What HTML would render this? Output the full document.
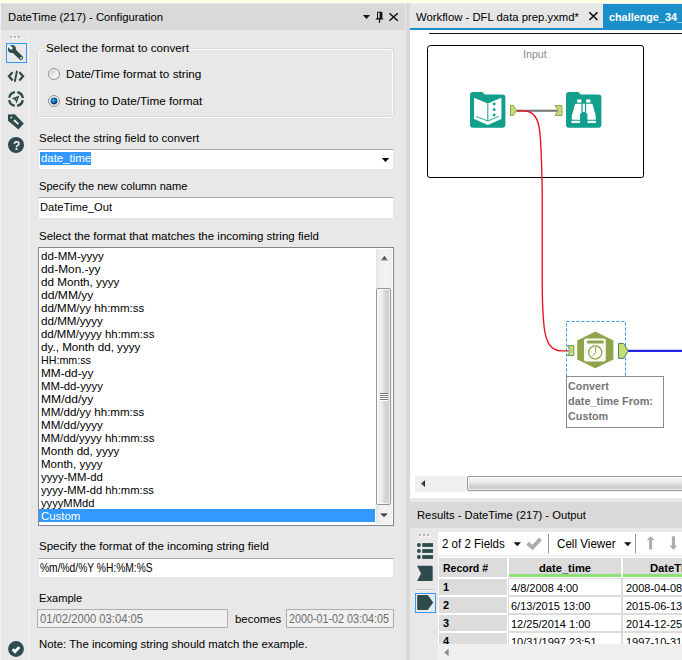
<!DOCTYPE html>
<html lang="en"><head><meta charset="utf-8"><title>DateTime (217) - Configuration</title>
<style>
html,body{margin:0;padding:0;background:#fff;}
#root{position:relative;width:682px;height:660px;overflow:hidden;background:#e8e8e8;font-family:"Liberation Sans",sans-serif;font-size:11.5px;line-height:14px;color:#000;}
#root div,#root svg,#root span{position:absolute;box-sizing:border-box;}
.t{white-space:pre;transform-origin:0 50%;display:block;}

</style></head>
<body>
<div id="root">
<div style="left:0px;top:0px;width:682px;height:3px;background:#ffffe1;"></div>
<div style="left:0px;top:3px;width:1px;height:657px;background:#f2f2f2;"></div>
<div style="left:1px;top:3px;width:404px;height:27px;background:#d9d9d9;border-top:1px solid #e4e4e4;"></div>
<svg style="left:360px;top:10px" width="42" height="15" viewBox="360 10 42 15">
<path d="M362.9 15h7.2l-3.6 4.1z" fill="#111"/>
<path d="M377.5 12.2h4.2v6.2h-4.2z" fill="none" stroke="#111" stroke-width="1"/>
<path d="M379.6 12.2h2.6v6.2h-2.6z" fill="#111"/>
<path d="M375.8 18.9h7.4M379.5 19v4" stroke="#111" stroke-width="1.2" fill="none"/>
<path d="M389.4 13.2l8.4 7.6M397.8 13.2l-8.4 7.6" stroke="#111" stroke-width="1.5" fill="none"/>
</svg>
<div style="left:28px;top:33px;width:1px;height:627px;background:#f4f4f4;"></div>
<div style="left:10px;top:36px;width:2px;height:2px;background:#b4b4b4;box-shadow:1px 1px 0 #fff;"></div>
<div style="left:14px;top:36px;width:2px;height:2px;background:#b4b4b4;box-shadow:1px 1px 0 #fff;"></div>
<div style="left:18px;top:36px;width:2px;height:2px;background:#b4b4b4;box-shadow:1px 1px 0 #fff;"></div>
<div style="left:6px;top:43px;width:21px;height:20px;border:1px solid #3399ff;background:#e9e9e9;"></div>
<svg style="left:6px;top:43px" width="21" height="20" viewBox="6 43 21 20">
<path d="M13.4 50.4 L20.9 57.8" stroke="#2f4b4b" stroke-width="4.4" stroke-linecap="round"/>
<circle cx="11.9" cy="48.9" r="4" fill="#2f4b4b"/>
<path d="M11.4 48.4 L8.5 45.5" stroke="#e9e9e9" stroke-width="2.8"/>
<circle cx="11.2" cy="48.2" r="1.4" fill="#e9e9e9"/>
<circle cx="21.1" cy="58" r="1" fill="#e9e9e9"/>
</svg>
<svg style="left:6px;top:68px" width="21" height="16" viewBox="6 68 21 16">
<path d="M12.6 72.2 L9 76.3 L12.6 80.4 M19.4 72.2 L23 76.3 L19.4 80.4" stroke="#2f4b4b" stroke-width="2.3" fill="none"/>
<path d="M17 70.8 L14.8 81.8" stroke="#2f4b4b" stroke-width="1.9" fill="none"/>
</svg>
<svg style="left:6px;top:89px" width="21" height="20" viewBox="6 89 21 20">
<circle cx="16" cy="99" r="6.9" fill="none" stroke="#2f4b4b" stroke-width="2.4" stroke-dasharray="8.3 2.54" stroke-dashoffset="-1.27"/>
<path d="M19.4 95.6 L11.6 98.4 L15.1 99.9 L16.6 103.4 Z" fill="#2f4b4b"/>
<path d="M17.2 97.9 L15.9 99.1 L16.3 100 Z" fill="#e8e8e8"/>
</svg>
<svg style="left:6px;top:112px" width="21" height="20" viewBox="6 112 21 20">
<path d="M8 114.6 L14.8 114.2 L23.8 123.6 L18.4 129.4 L8 120.8 Z" fill="#2f4b4b"/>
<circle cx="11.3" cy="117.4" r="1" fill="#e8e8e8"/>
<path d="M14 120 L18.4 124.2" stroke="#f4f4f4" stroke-width="1.8"/>
</svg>
<svg style="left:6px;top:135px" width="21" height="20" viewBox="6 135 21 20">
<circle cx="16" cy="145" r="8" fill="#2f4b4b"/>
</svg>
<svg style="left:6px;top:639px" width="21" height="20" viewBox="6 639 21 20">
<circle cx="16" cy="649" r="7.9" fill="#2f4b4b"/>
<path d="M12.7 649.3 L15 651.8 L19.3 647.1" stroke="#fff" stroke-width="2.8" fill="none"/>
</svg>
<div style="left:38px;top:49px;width:355px;height:69px;border:1px solid #fdfdfd;border-radius:3px;"></div>
<div style="left:37px;top:48px;width:357px;height:69px;border:1px solid #d3dde4;border-radius:3px;"></div>
<div style="left:44px;top:44px;width:146px;height:12px;background:#e8e8e8;"></div>
<svg style="left:46.8px;top:66.8px" width="14" height="14" viewBox="-7 -7 14 14"><defs><linearGradient id="rgoff" x1="0.15" y1="0.15" x2="0.85" y2="0.85"><stop offset="0" stop-color="#c9ced3"/><stop offset="0.55" stop-color="#e9ebed"/><stop offset="1" stop-color="#fbfbfb"/></linearGradient></defs><circle r="5.45" fill="#f6f6f6" stroke="#8a8b8c" stroke-width="1"/><circle r="3.7" fill="url(#rgoff)"/></svg>
<svg style="left:46.8px;top:93.8px" width="14" height="14" viewBox="-7 -7 14 14"><defs><radialGradient id="rgon" cx="0.42" cy="0.4" r="0.62"><stop offset="0" stop-color="#4cc6f6"/><stop offset="0.35" stop-color="#1b84c8"/><stop offset="0.8" stop-color="#0f3f72"/><stop offset="1" stop-color="#0c2f58"/></radialGradient></defs><circle r="5.45" fill="#f6f6f6" stroke="#8a8b8c" stroke-width="1"/><circle r="3.45" fill="url(#rgon)"/></svg>
<div style="left:38px;top:149px;width:356px;height:21px;background:#fff;border:1px solid #e3e6ec;border-top-color:#abadb3;"></div>
<div style="left:40px;top:152px;width:51px;height:13px;background:#3399ff;"></div>
<svg style="left:381px;top:156px" width="9" height="6" viewBox="381 156 9 6"><path d="M381.8 158h7.4l-3.7 4z" fill="#000"/></svg>
<div style="left:38px;top:197px;width:356px;height:22px;background:#fff;border:1px solid #e3e6ec;border-top-color:#abadb3;"></div>
<div style="left:38px;top:247px;width:356px;height:279px;background:#fff;border:1px solid #828790;"></div>
<div style="left:39px;top:509px;width:336px;height:13px;background:#3399ff;"></div>
<div style="left:376px;top:249px;width:16px;height:275px;background:linear-gradient(90deg,#e4e4e4 0,#eeeeee 18%,#f3f3f3 50%,#efefef 100%);"></div>
<svg style="left:376px;top:249px" width="17" height="17" viewBox="376 249 17 17"><defs><linearGradient id="aup" x1="0" y1="0" x2="0" y2="1"><stop offset="0" stop-color="#1a1a1a"/><stop offset="1" stop-color="#8a8a8a"/></linearGradient></defs><path d="M380.7 260.4h7.4l-3.7-4.5z" fill="url(#aup)"/></svg>
<svg style="left:376px;top:507px" width="17" height="17" viewBox="376 507 17 17"><defs><linearGradient id="adn" x1="0" y1="0" x2="0" y2="1"><stop offset="0" stop-color="#1a1a1a"/><stop offset="1" stop-color="#8a8a8a"/></linearGradient></defs><path d="M380.4 513.4h7.2l-3.6 4.2z" fill="url(#adn)"/></svg>
<div style="left:376px;top:288px;width:15px;height:217px;border:1px solid #979797;border-radius:2px;background:linear-gradient(90deg,#f5f5f5 0,#ebebeb 38%,#d6d6da 62%,#cbcbd0 100%);box-shadow:inset 0 0 0 1px rgba(255,255,255,.7);"></div>
<div style="left:380px;top:393px;width:8px;height:1px;background:#7a7a7a;box-shadow:0 1px 0 #fff;"></div>
<div style="left:380px;top:395px;width:8px;height:1px;background:#7a7a7a;box-shadow:0 1px 0 #fff;"></div>
<div style="left:380px;top:397px;width:8px;height:1px;background:#7a7a7a;box-shadow:0 1px 0 #fff;"></div>
<div style="left:380px;top:399px;width:8px;height:1px;background:#7a7a7a;box-shadow:0 1px 0 #fff;"></div>
<div style="left:38px;top:558px;width:356px;height:20px;background:#fff;border:1px solid #e3e6ec;border-top-color:#abadb3;"></div>
<div style="left:37px;top:609.4px;width:191px;height:19px;background:#f0f0f0;border:1px solid #adadad;border-radius:1px;"></div>
<div style="left:286px;top:609.4px;width:107.5px;height:19px;background:#f0f0f0;border:1px solid #adadad;border-radius:1px;"></div>
<div style="left:406px;top:3px;width:4px;height:657px;background:#d9d9d9;"></div>
<div style="left:410px;top:3px;width:272px;height:25px;background:#e6e6e6;border-top:1px solid #eeeeee;"></div>
<div style="left:603px;top:4px;width:79px;height:26px;background:#1a8fc9;"></div>
<div style="left:410px;top:28px;width:272px;height:2px;background:#1a8fc9;"></div>
<svg style="left:586px;top:9px" width="15" height="15" viewBox="586 9 15 15"><path d="M589.4 12.4l8 7.6M597.4 12.4l-8 7.6" stroke="#111" stroke-width="1.5" fill="none"/></svg>
<div style="left:410px;top:30px;width:272px;height:468px;background:#fff;"></div>
<div style="left:429px;top:33px;width:253px;height:1px;background:#111;"></div>
<div style="left:427px;top:45px;width:217px;height:133px;border:1px solid #000;border-radius:3.5px 3px 2.5px 3px;"></div>
<svg style="left:468.9px;top:91.3px" width="38" height="38" viewBox="-1 -1 38 38">
<path d="M3 0 H11.6 Q13 0 13.6 1.2 Q14.2 2.4 15.6 2.4 H32.4 Q35.4 2.4 35.4 5.4 V32.7 Q35.4 35.7 32.4 35.7 H3 Q0 35.7 0 32.7 V3 Q0 0 3 0 Z" fill="#12a08c"/>
<path d="M4.1 5.7 L17.8 11.4 L31.4 5.7 V27 L17.8 33 L4.1 27 Z" fill="#fff"/>
<path d="M17.8 11.4 V29" stroke="#12a08c" stroke-width="1" fill="none"/>
<path d="M6.1 24.4 L17.8 29 L28.8 24.4" stroke="#12a08c" stroke-width="0.9" fill="none"/>
<circle cx="24.2" cy="12" r="1.45" fill="#12a08c"/><circle cx="24.2" cy="17.6" r="1.45" fill="#12a08c"/><circle cx="24.2" cy="23" r="1.45" fill="#12a08c"/>
</svg>
<svg style="left:564.9px;top:91.3px" width="38" height="38" viewBox="-1 -1 38 38">
<path d="M3 0 H11.6 Q13 0 13.6 1.2 Q14.2 2.4 15.6 2.4 H32.4 Q35.4 2.4 35.4 5.4 V32.7 Q35.4 35.7 32.4 35.7 H3 Q0 35.7 0 32.7 V3 Q0 0 3 0 Z" fill="#12a08c"/>
<path d="M11.1 7.4 h4.3 v3.1 h-4.3z M20.1 7.4 h4.3 v3.1 h-4.3z" fill="#fff"/>
<path d="M9.1 11.7 H15.4 V21.4 H14.1 V27.7 H5.8 V23.7 Z" fill="#fff"/>
<path d="M26.44 11.7 H20.14 V21.4 H21.44 V27.7 H29.74 V23.7 Z" fill="#fff"/>
<path d="M16.7 11.7 h2.2 v8.3 h-2.2z" fill="#fff"/>
<rect x="5.4" y="28.7" width="8.7" height="2.3" rx="0.8" fill="#fff"/><rect x="21.44" y="28.7" width="8.7" height="2.3" rx="0.8" fill="#fff"/>
</svg>
<svg style="left:410px;top:30px" width="272" height="468" viewBox="410 30 272 468">
<path d="M516.5 110.8 H557.6" stroke="#727272" stroke-width="2" fill="none"/>
<path d="M516.5 110.8 H523 C533 110.8 538.6 117 540 134 C541.4 150 541.8 165 542.2 190 L542.2 280 C542.2 300 542.6 312 544 326 C545.6 341 550 350.8 562 350.8 H569" stroke="#ea0f1c" stroke-width="1.35" fill="none"/>
<path d="M628 350.8 H682" stroke="#2525e6" stroke-width="2.2" fill="none"/>
<!-- selection -->
<rect x="566.5" y="321.5" width="59" height="56" fill="none" stroke="#3b97ea" stroke-width="1" stroke-dasharray="3 2"/>
<!-- anchors -->
<path d="M510.5 105.5 H513.2 L516.6 110.6 L513.2 115.6 H510.5 Z" fill="#c5dd77" stroke="#7ea04a" stroke-width="0.9"/>
<path d="M555 105.5 H562 V115.6 H555 L558.2 110.6 Z" fill="#c5dd77" stroke="#7ea04a" stroke-width="0.9"/>
<path d="M567.5 345.6 H573.8 V355.6 H567.5 L570.4 350.8 Z" fill="#c5dd77" stroke="#5c8a4a" stroke-width="0.9"/>
<path d="M618.6 343.4 H623.6 L628.2 351 L623.6 358.4 H618.6 Z" fill="#c5dd77" stroke="#3f7f5a" stroke-width="1"/>
<!-- hexagon -->
<path d="M595.3 331.6 L613.4 340.4 V359.6 L595.3 368.2 L577.2 359.6 V340.4 Z" fill="#8fa54b"/>
<rect x="584" y="338.4" width="21.8" height="23" rx="2.2" fill="#f8faf3"/>
<rect x="586.8" y="340.6" width="17" height="3" rx="1.5" fill="#8fa54b"/>
<circle cx="595.2" cy="352.4" r="6.6" fill="none" stroke="#8fa54b" stroke-width="1.25"/>
<path d="M595.6 347 V352.6 L592.8 355.6" fill="none" stroke="#8fa54b" stroke-width="1"/>
</svg>
<div style="left:566px;top:376px;width:98px;height:52px;background:#fff;border:1px solid #8c8c8c;"></div>
<div style="left:415px;top:476px;width:267px;height:16px;background:#f0f0f0;"></div>
<svg style="left:415px;top:476px" width="17" height="16" viewBox="415 476 17 16"><defs><linearGradient id="alf" x1="0" y1="0" x2="1" y2="0"><stop offset="0" stop-color="#8a8a8a"/><stop offset="1" stop-color="#1a1a1a"/></linearGradient></defs><path d="M425 480.2v6.8l-4.4-3.4z" fill="url(#alf)"/></svg>
<div style="left:467px;top:476px;width:230px;height:15px;border:1px solid #979797;border-radius:2px;background:linear-gradient(180deg,#f5f5f5 0,#ebebeb 38%,#d6d6da 62%,#c8c8ce 100%);box-shadow:inset 0 0 0 1px rgba(255,255,255,.7);"></div>
<div style="left:410px;top:498px;width:272px;height:4px;background:#e8e8e8;"></div>
<div style="left:410px;top:502px;width:272px;height:26px;background:#d9d9d9;"></div>
<div style="left:419px;top:534px;width:2px;height:2px;background:#b4b4b4;box-shadow:1px 1px 0 #fff;"></div>
<div style="left:423px;top:534px;width:2px;height:2px;background:#b4b4b4;box-shadow:1px 1px 0 #fff;"></div>
<div style="left:427px;top:534px;width:2px;height:2px;background:#b4b4b4;box-shadow:1px 1px 0 #fff;"></div>
<svg style="left:414px;top:540px" width="24" height="76" viewBox="414 540 24 76">
<g fill="#2f4b4b"><circle cx="418.9" cy="545" r="1.95"/><circle cx="418.9" cy="551" r="1.95"/><circle cx="418.9" cy="557" r="1.95"/>
<rect x="422.2" y="543.1" width="10.8" height="3.8"/><rect x="422.2" y="549.1" width="10.8" height="3.8"/><rect x="422.2" y="555.1" width="10.8" height="3.8"/>
<path d="M417.1 565.8 H431.7 Q432.7 565.8 432.7 566.8 V580 Q432.7 581 431.7 581 H417.1 L421 573.4 Z"/></g>
<path d="M417 589.5 H433.4" stroke="#c2c2c2" stroke-width="1"/>
<path d="M417 590.5 H433.4" stroke="#f6f6f6" stroke-width="1"/>
<rect x="415.5" y="593.5" width="20" height="19" fill="#e9e9e9" stroke="#3399ff" stroke-width="1"/>
<path d="M418.2 595.1 H427.8 L433.2 602.6 L427.8 610.1 H418.2 Q417.2 610.1 417.2 609.1 V596.1 Q417.2 595.1 418.2 595.1 Z" fill="#2f4b4b"/>
</svg>
<div style="left:438px;top:532px;width:244px;height:23px;background:#fff;"></div>
<svg style="left:510px;top:532px" width="172" height="23" viewBox="510 532 172 23">
<path d="M513.6 542.2h7.4l-3.7 4.1z" fill="#111"/>
<path d="M527.6 543.2 L532.4 547.6 L540.6 538.8" stroke="#adadad" stroke-width="3.9" fill="none"/>
<path d="M548.5 534 V553.4 M635.5 534 V553.4" stroke="#9a9a9a" stroke-width="1"/>
<path d="M624 542.2h7.4l-3.7 4.1z" fill="#111"/>
<path d="M650.6 535.9 L654.4 540.2 H652.1 V549.4 H649.1 V540.2 H646.8 Z" fill="#adadad"/>
<path d="M673.4 549.9 L677.2 545.6 H674.9 V536.3 H671.9 V545.6 H669.6 Z" fill="#adadad"/>
</svg>
<div style="left:438px;top:555px;width:244px;height:89px;background:#fff;"></div>
<div style="left:438px;top:554.5px;width:244px;height:2px;background:#f0f1f4;"></div>
<div style="left:439px;top:558px;width:68px;height:19px;background:#dcdcdc;"></div>
<div style="left:509px;top:558px;width:112px;height:19px;background:#dcdcdc;border-bottom:3px solid #8be077;"></div>
<div style="left:623px;top:558px;width:70px;height:19px;background:#dcdcdc;border-bottom:3px solid #8be077;"></div>
<div style="left:439px;top:579px;width:68px;height:16px;background:#dcdcdc;"></div>
<div style="left:508px;top:578px;width:114px;height:18px;background:#fff;border:1px solid #dcdcdc;"></div>
<div style="left:622px;top:578px;width:80px;height:18px;background:#fff;border:1px solid #dcdcdc;"></div>
<div style="left:439px;top:597px;width:68px;height:16px;background:#dcdcdc;"></div>
<div style="left:508px;top:596px;width:114px;height:18px;background:#fff;border:1px solid #dcdcdc;"></div>
<div style="left:622px;top:596px;width:80px;height:18px;background:#fff;border:1px solid #dcdcdc;"></div>
<div style="left:439px;top:615px;width:68px;height:16px;background:#dcdcdc;"></div>
<div style="left:508px;top:614px;width:114px;height:18px;background:#fff;border:1px solid #dcdcdc;"></div>
<div style="left:622px;top:614px;width:80px;height:18px;background:#fff;border:1px solid #dcdcdc;"></div>
<div style="left:439px;top:633px;width:68px;height:16px;background:#dcdcdc;"></div>
<div style="left:508px;top:632px;width:114px;height:18px;background:#fff;border:1px solid #dcdcdc;"></div>
<div style="left:622px;top:632px;width:80px;height:18px;background:#fff;border:1px solid #dcdcdc;"></div>
<div style="left:438px;top:644px;width:244px;height:16px;background:#f0f0f0;z-index:5;"></div>
<svg style="left:438px;top:644px;z-index:6" width="17" height="16" viewBox="438 644 17 16"><path d="M448.6 648.6v7.6l-4.4-3.8z" fill="#8a8a8a"/></svg>
<span class="t" style="left:8.2px;top:10px;transform:scaleX(0.9804);">DateTime (217) - Configuration</span>
<span class="t" style="left:12.5px;top:139px;font-size:12.5px;font-weight:700;color:#fff;transform:scaleX(0.9400);transform:scaleX(0.95);will-change:transform;">?</span>
<span class="t" style="left:46.4px;top:41px;transform:scaleX(1.0169);">Select the format to convert</span>
<span class="t" style="left:65.6px;top:67px;transform:scaleX(1.0218);">Date/Time format to string</span>
<span class="t" style="left:64.6px;top:94px;transform:scaleX(1.0213);">String to Date/Time format</span>
<span class="t" style="left:38.8px;top:131px;transform:scaleX(0.9984);">Select the string field to convert</span>
<span class="t" style="left:40.6px;top:151px;color:#fff;transform:scaleX(0.9898);">date_time</span>
<span class="t" style="left:38.8px;top:179px;transform:scaleX(0.9679);">Specify the new column name</span>
<span class="t" style="left:39.8px;top:200px;transform:scaleX(0.9683);">DateTime_Out</span>
<span class="t" style="left:38.8px;top:229px;transform:scaleX(1.0001);">Select the format that matches the incoming string field</span>
<span class="t" style="left:41.3px;top:249px;transform:scaleX(1.0044);">dd-MM-yyyy</span>
<span class="t" style="left:41.3px;top:262px;transform:scaleX(1.0325);">dd-Mon.-yy</span>
<span class="t" style="left:41.3px;top:275px;transform:scaleX(1.0137);">dd Month, yyyy</span>
<span class="t" style="left:41.3px;top:288px;transform:scaleX(1.0513);">dd/MM/yy</span>
<span class="t" style="left:41.3px;top:301px;transform:scaleX(1.0050);">dd/MM/yy hh:mm:ss</span>
<span class="t" style="left:41.3px;top:314px;transform:scaleX(1.0091);">dd/MM/yyyy</span>
<span class="t" style="left:41.3px;top:327px;transform:scaleX(0.9913);">dd/MM/yyyy hh:mm:ss</span>
<span class="t" style="left:41.3px;top:340px;transform:scaleX(1.0120);">dy., Month dd, yyyy</span>
<span class="t" style="left:41.3px;top:353px;transform:scaleX(0.9297);">HH:mm:ss</span>
<span class="t" style="left:41.3px;top:366px;transform:scaleX(1.0249);">MM-dd-yy</span>
<span class="t" style="left:41.3px;top:379px;transform:scaleX(0.9884);">MM-dd-yyyy</span>
<span class="t" style="left:41.3px;top:392px;transform:scaleX(1.0513);">MM/dd/yy</span>
<span class="t" style="left:41.3px;top:405px;transform:scaleX(1.0050);">MM/dd/yy hh:mm:ss</span>
<span class="t" style="left:41.3px;top:418px;transform:scaleX(1.0091);">MM/dd/yyyy</span>
<span class="t" style="left:41.3px;top:431px;transform:scaleX(0.9913);">MM/dd/yyyy hh:mm:ss</span>
<span class="t" style="left:41.3px;top:444px;transform:scaleX(1.0137);">Month dd, yyyy</span>
<span class="t" style="left:41.3px;top:457px;transform:scaleX(1.0007);">Month, yyyy</span>
<span class="t" style="left:41.3px;top:470px;transform:scaleX(0.9884);">yyyy-MM-dd</span>
<span class="t" style="left:41.3px;top:483px;transform:scaleX(0.9762);">yyyy-MM-dd hh:mm:ss</span>
<span class="t" style="left:41.3px;top:496px;transform:scaleX(0.9717);">yyyyMMdd</span>
<span class="t" style="left:41.3px;top:509px;color:#fff;transform:scaleX(0.9943);">Custom</span>
<span class="t" style="left:38.8px;top:539px;transform:scaleX(1.0022);">Specify the format of the incoming string field</span>
<span class="t" style="left:40.2px;top:561px;font-size:12.5px;transform:scaleX(0.8200);">%m/%d/%Y %H:%M:%S</span>
<span class="t" style="left:38.6px;top:591px;transform:scaleX(0.9654);">Example</span>
<span class="t" style="left:40.0px;top:612px;font-size:12px;color:#6d6d6d;transform:scaleX(0.9354);">01/02/2000 03:04:05</span>
<span class="t" style="left:234.6px;top:612px;transform:scaleX(0.9920);">becomes</span>
<span class="t" style="left:288.6px;top:612px;font-size:12px;color:#6d6d6d;transform:scaleX(0.8974);">2000-01-02 03:04:05</span>
<span class="t" style="left:38.6px;top:637px;transform:scaleX(0.9894);">Note: The incoming string should match the example.</span>
<span class="t" style="left:415.8px;top:10px;transform:scaleX(0.9847);">Workflow - DFL data prep.yxmd*</span>
<span class="t" style="left:609.0px;top:10px;font-weight:700;color:#fff;transform:scaleX(0.9400);transform:scaleX(0.94);">challenge_34_start</span>
<span class="t" style="left:523.0px;top:47px;font-size:11px;color:#8a8a8a;transform:scaleX(0.9686);">Input</span>
<span class="t" style="left:568.0px;top:379px;font-weight:700;color:#757575;transform:scaleX(0.9400);transform:scaleX(0.94);">Convert</span>
<span class="t" style="left:568.0px;top:394px;font-weight:700;color:#757575;transform:scaleX(0.9501);">date_time From:</span>
<span class="t" style="left:568.0px;top:409px;font-weight:700;color:#757575;transform:scaleX(0.9400);transform:scaleX(0.94);">Custom</span>
<span class="t" style="left:416.6px;top:508px;transform:scaleX(0.9781);">Results - DateTime (217) - Output</span>
<span class="t" style="left:442.4px;top:537px;font-size:12px;transform:scaleX(0.9606);">2 of 2 Fields</span>
<span class="t" style="left:556.6px;top:537px;font-size:12px;transform:scaleX(0.9691);">Cell Viewer</span>
<span class="t" style="left:442.5px;top:561px;font-weight:700;transform:scaleX(0.9143);">Record #</span>
<span class="t" style="left:538.6px;top:561px;font-weight:700;transform:scaleX(0.9686);">date_time</span>
<span class="t" style="left:650.0px;top:561px;font-weight:700;transform:scaleX(0.9773);">DateTime_Out</span>
<span class="t" style="left:442.6px;top:580px;font-weight:700;transform:scaleX(0.9400);transform:scaleX(0.95);">1</span>
<span class="t" style="left:511.4px;top:581px;transform:scaleX(0.9400);transform:scaleX(0.955);">4/8/2008 4:00</span>
<span class="t" style="left:626.0px;top:581px;transform:scaleX(0.9400);transform:scaleX(0.955);">2008-04-08 04:00:00</span>
<span class="t" style="left:442.6px;top:598px;font-weight:700;transform:scaleX(0.9400);transform:scaleX(0.95);">2</span>
<span class="t" style="left:511.4px;top:599px;transform:scaleX(0.9400);transform:scaleX(0.955);">6/13/2015 13:00</span>
<span class="t" style="left:626.0px;top:599px;transform:scaleX(0.9400);transform:scaleX(0.955);">2015-06-13 13:00:00</span>
<span class="t" style="left:442.6px;top:616px;font-weight:700;transform:scaleX(0.9400);transform:scaleX(0.95);">3</span>
<span class="t" style="left:511.4px;top:617px;transform:scaleX(0.9400);transform:scaleX(0.955);">12/25/2014 1:00</span>
<span class="t" style="left:626.0px;top:617px;transform:scaleX(0.9400);transform:scaleX(0.955);">2014-12-25 01:00:00</span>
<span class="t" style="left:442.6px;top:634px;font-weight:700;transform:scaleX(0.9400);transform:scaleX(0.95);">4</span>
<span class="t" style="left:511.4px;top:635px;transform:scaleX(0.9400);transform:scaleX(0.955);">10/31/1997 23:51</span>
<span class="t" style="left:626.0px;top:635px;transform:scaleX(0.9400);transform:scaleX(0.955);">1997-10-31 23:51:00</span>
</div>
</body></html>
